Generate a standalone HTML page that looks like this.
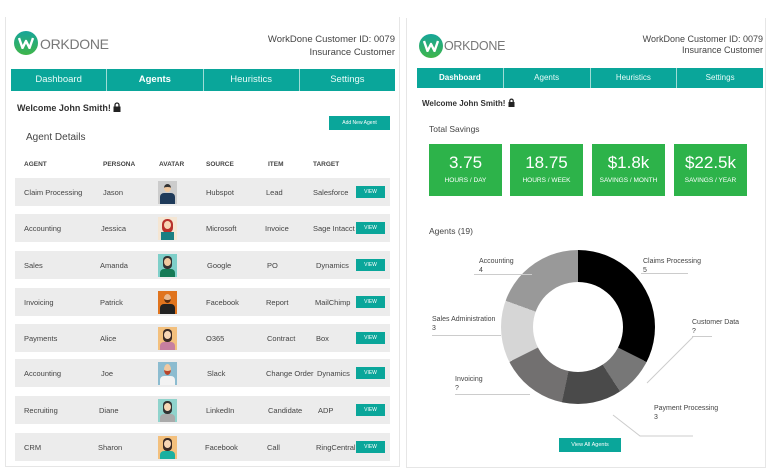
<!DOCTYPE html>
<html><head><meta charset="utf-8"><style>
*{margin:0;padding:0;box-sizing:border-box}
body{width:768px;height:461px;background:#fff;font-family:"Liberation Sans",sans-serif;position:relative;overflow:hidden;color:#333}
.abs{position:absolute}
.panel{position:absolute;border:1px solid #e6e6e6;background:#fff}
.logo{position:absolute;width:24px;height:24px;border-radius:50%;background:linear-gradient(#16a599,#3fb54a)}
.logo svg{position:absolute;left:4px;top:6px}
.logot{position:absolute;color:#777;font-size:14px;letter-spacing:-0.3px}
.cid{position:absolute;text-align:right;font-size:9.5px;color:#444;line-height:13px}
.nav{position:absolute;background:#0aa69a;display:flex}
.nav div{flex:1;color:#e8fbf8;text-align:center;border-right:1px solid #9fdcd6}
.nav div:last-child{border-right:none}
.row{position:absolute;left:15px;width:375px;height:28px;background:#ececec;font-size:7.5px;color:#444}
.row span{position:absolute;top:10px}
.av{position:absolute;left:143px;top:3px;width:19px;height:23px;overflow:hidden}
.view{position:absolute;left:341px;top:8px;width:29px;height:12px;background:#0aa69a;color:#fff;font-size:5px;text-align:center;line-height:12px}
.th{position:absolute;top:161px;font-size:6.5px;font-weight:bold;color:#444}
.gb{position:absolute;top:144px;width:73px;height:52px;background:#2db34a;color:#fff;text-align:center}
.gb b{display:block;font-size:17px;margin-top:9px;font-weight:normal}
.gb i{display:block;font-style:normal;font-size:6.5px;margin-top:4px}
.lbl{position:absolute;font-size:7px;color:#444;line-height:9px}
.ln{position:absolute;height:1px;background:#ccc}
</style></head><body>
<!-- left panel -->
<div class="panel" style="left:5px;top:17px;width:395px;height:450px;border-top:none"></div>
<div class="logo" style="left:14px;top:31px"><svg width="16" height="12"><path d="M1 1 L4.5 11 L8 4 L11.5 11 L15 1" stroke="#fff" stroke-width="2.4" fill="none" stroke-linejoin="round"/></svg></div>
<div class="logot" style="left:40px;top:36px">ORKDONE</div>
<div class="cid" style="right:373px;top:33px;width:200px">WorkDone Customer ID: 0079<br>Insurance Customer</div>
<div class="nav" style="left:11px;top:69px;width:384px;height:22px;font-size:9.5px;line-height:22px">
<div>Dashboard</div><div style="font-weight:bold;color:#fff">Agents</div><div>Heuristics</div><div>Settings</div></div>
<div class="abs" style="left:17px;top:102px;font-size:9px;font-weight:bold;color:#333">Welcome John Smith! <svg width="8" height="10" style="vertical-align:-1px"><path d="M2 5V3a2 2 0 0 1 4 0v2" stroke="#222" stroke-width="1.3" fill="none"/><rect x="0.5" y="4.5" width="7" height="5.5" fill="#222"/></svg></div>
<div class="abs" style="left:329px;top:116px;width:61px;height:14px;background:#0aa69a;color:#fff;font-size:5px;text-align:center;line-height:14px">Add New Agent</div>
<div class="abs" style="left:26px;top:132px;font-size:10px;color:#444">Agent Details</div>
<div class="th" style="left:24px">AGENT</div><div class="th" style="left:103px">PERSONA</div><div class="th" style="left:159px">AVATAR</div><div class="th" style="left:206px">SOURCE</div><div class="th" style="left:268px">ITEM</div><div class="th" style="left:313px">TARGET</div>

<div class="row" style="top:178px"><span style="left:9px">Claim Processing</span><span style="left:88px">Jason</span><div class="av" style="background:#ccc"><div style="position:absolute;left:6px;top:3px;width:7px;height:8px;border-radius:50%;background:#f1c9a0;border-top:3px solid #333"></div><div style="position:absolute;left:2px;top:12px;width:15px;height:12px;background:#1e3a5a;border-radius:4px 4px 0 0"></div></div><span style="left:191px">Hubspot</span><span style="left:251px">Lead</span><span style="left:298px">Salesforce</span><div class="view">VIEW</div></div>
<div class="row" style="top:214px"><span style="left:9px">Accounting</span><span style="left:86px">Jessica</span><div class="av" style="background:#f5e6d3"><div style="position:absolute;left:4px;top:2px;width:11px;height:14px;border-radius:5px;background:#b8312b"></div><div style="position:absolute;left:6px;top:4px;width:7px;height:8px;border-radius:50%;background:#f7d6b5"></div><div style="position:absolute;left:3px;top:15px;width:13px;height:9px;background:#1a7f83"></div></div><span style="left:191px">Microsoft</span><span style="left:250px">Invoice</span><span style="left:298px">Sage Intacct</span><div class="view">VIEW</div></div>
<div class="row" style="top:251px"><span style="left:9px">Sales</span><span style="left:85px">Amanda</span><div class="av" style="background:#7ecfc9"><div style="position:absolute;left:5px;top:2px;width:9px;height:13px;border-radius:4px;background:#333"></div><div style="position:absolute;left:6px;top:4px;width:7px;height:8px;border-radius:50%;background:#f1c9a0"></div><div style="position:absolute;left:2px;top:15px;width:15px;height:9px;background:#157a55;border-radius:4px 4px 0 0"></div></div><span style="left:192px">Google</span><span style="left:252px">PO</span><span style="left:301px">Dynamics</span><div class="view">VIEW</div></div>
<div class="row" style="top:288px"><span style="left:9px">Invoicing</span><span style="left:85px">Patrick</span><div class="av" style="background:#e0741e"><div style="position:absolute;left:6px;top:3px;width:7px;height:9px;border-radius:50%;background:#e9b98f;border-bottom:3px solid #5a2d10"></div><div style="position:absolute;left:2px;top:13px;width:15px;height:11px;background:#222;border-radius:4px 4px 0 0"></div></div><span style="left:191px">Facebook</span><span style="left:251px">Report</span><span style="left:300px">MailChimp</span><div class="view">VIEW</div></div>
<div class="row" style="top:324px"><span style="left:9px">Payments</span><span style="left:85px">Alice</span><div class="av" style="background:#f3c07d"><div style="position:absolute;left:5px;top:2px;width:9px;height:13px;border-radius:4px;background:#3a2a25"></div><div style="position:absolute;left:6px;top:4px;width:7px;height:8px;border-radius:50%;background:#f7d6b5"></div><div style="position:absolute;left:2px;top:15px;width:15px;height:9px;background:#c77fa0;border-radius:4px 4px 0 0"></div></div><span style="left:191px">O365</span><span style="left:252px">Contract</span><span style="left:301px">Box</span><div class="view">VIEW</div></div>
<div class="row" style="top:359px"><span style="left:9px">Accounting</span><span style="left:86px">Joe</span><div class="av" style="background:#8cbcd0"><div style="position:absolute;left:6px;top:2px;width:7px;height:11px;border-radius:50%;background:#f1c9a0;border-bottom:4px solid #b8452b"></div><div style="position:absolute;left:2px;top:14px;width:15px;height:10px;background:#f3f3f3;border-radius:4px 4px 0 0"></div></div><span style="left:192px">Slack</span><span style="left:251px">Change Order</span><span style="left:302px">Dynamics</span><div class="view">VIEW</div></div>
<div class="row" style="top:396px"><span style="left:9px">Recruiting</span><span style="left:84px">Diane</span><div class="av" style="background:#8fd3cc"><div style="position:absolute;left:5px;top:2px;width:9px;height:13px;border-radius:4px;background:#333"></div><div style="position:absolute;left:6px;top:4px;width:7px;height:8px;border-radius:50%;background:#f7d6b5"></div><div style="position:absolute;left:2px;top:15px;width:15px;height:9px;background:#aaa;border-radius:4px 4px 0 0"></div></div><span style="left:191px">LinkedIn</span><span style="left:253px">Candidate</span><span style="left:303px">ADP</span><div class="view">VIEW</div></div>
<div class="row" style="top:433px"><span style="left:9px">CRM</span><span style="left:83px">Sharon</span><div class="av" style="background:#f3c07d"><div style="position:absolute;left:5px;top:2px;width:9px;height:13px;border-radius:4px;background:#3a2a25"></div><div style="position:absolute;left:6px;top:4px;width:7px;height:8px;border-radius:50%;background:#f7d6b5"></div><div style="position:absolute;left:2px;top:15px;width:15px;height:9px;background:#1ab0a0;border-radius:4px 4px 0 0"></div></div><span style="left:190px">Facebook</span><span style="left:252px">Call</span><span style="left:301px">RingCentral</span><div class="view">VIEW</div></div>

<!-- right panel -->
<div class="panel" style="left:406px;top:18px;width:360px;height:450px;border-top:none"></div>
<div class="logo" style="left:419px;top:34px"><svg width="16" height="12"><path d="M1 1 L4.5 11 L8 4 L11.5 11 L15 1" stroke="#fff" stroke-width="2.4" fill="none" stroke-linejoin="round"/></svg></div>
<div class="logot" style="left:444px;top:39px;font-size:12.5px">ORKDONE</div>
<div class="cid" style="right:5px;top:34px;width:200px;font-size:9px;line-height:11px">WorkDone Customer ID: 0079<br>Insurance Customer</div>
<div class="nav" style="left:417px;top:68px;width:346px;height:20px;font-size:8px;line-height:19px">
<div style="font-weight:bold;color:#fff">Dashboard</div><div>Agents</div><div>Heuristics</div><div>Settings</div></div>
<div class="abs" style="left:422px;top:98px;font-size:8px;font-weight:bold;color:#333">Welcome John Smith! <svg width="7" height="9" style="vertical-align:-1px"><path d="M1.8 4.5V2.8a1.7 1.7 0 0 1 3.4 0v1.7" stroke="#222" stroke-width="1.2" fill="none"/><rect x="0.5" y="4" width="6" height="5" fill="#222"/></svg></div>
<div class="abs" style="left:429px;top:124px;font-size:8.5px;color:#444">Total Savings</div>
<div class="gb" style="left:429px"><b>3.75</b><i>HOURS / DAY</i></div>
<div class="gb" style="left:510px"><b>18.75</b><i>HOURS / WEEK</i></div>
<div class="gb" style="left:592px"><b>$1.8k</b><i>SAVINGS / MONTH</i></div>
<div class="gb" style="left:674px"><b>$22.5k</b><i>SAVINGS / YEAR</i></div>
<div class="abs" style="left:429px;top:226px;font-size:8.5px;color:#444">Agents (19)</div>
<div class="abs" style="left:501px;top:250px;width:154px;height:154px;border-radius:50%;background:conic-gradient(#000 17deg 117deg,#777 117deg 147deg,#4a4a4a 147deg 192deg,#727070 192deg 243deg,#d6d6d6 243deg 290deg,#999 290deg 377deg)"></div>
<div class="abs" style="left:533px;top:282px;width:90px;height:90px;border-radius:50%;background:#fff"></div>
<div class="lbl" style="left:479px;top:257px">Accounting<br>4</div><div class="ln" style="left:474px;top:274px;width:58px"></div>
<div class="lbl" style="left:643px;top:257px">Claims Processing<br>5</div><div class="ln" style="left:641px;top:273px;width:47px"></div>
<div class="lbl" style="left:432px;top:315px">Sales Administration<br>3</div><div class="ln" style="left:432px;top:335px;width:69px"></div>
<div class="lbl" style="left:692px;top:318px">Customer Data<br>?</div><div class="ln" style="left:692px;top:336px;width:20px"></div>
<svg class="abs" style="left:400px;top:220px" width="368" height="241"><g stroke="#ccc" stroke-width="1" fill="none"><path d="M247 163 L293 117"/><path d="M213 195 L240 216 L293 216"/></g></svg>
<div class="lbl" style="left:455px;top:375px">Invoicing<br>?</div><div class="ln" style="left:455px;top:394px;width:75px"></div>
<div class="lbl" style="left:654px;top:404px">Payment Processing<br>3</div>
<div class="abs" style="left:559px;top:438px;width:62px;height:14px;background:#0aa69a;color:#fff;font-size:5.5px;text-align:center;line-height:14px">View All Agents</div>
</body></html>
